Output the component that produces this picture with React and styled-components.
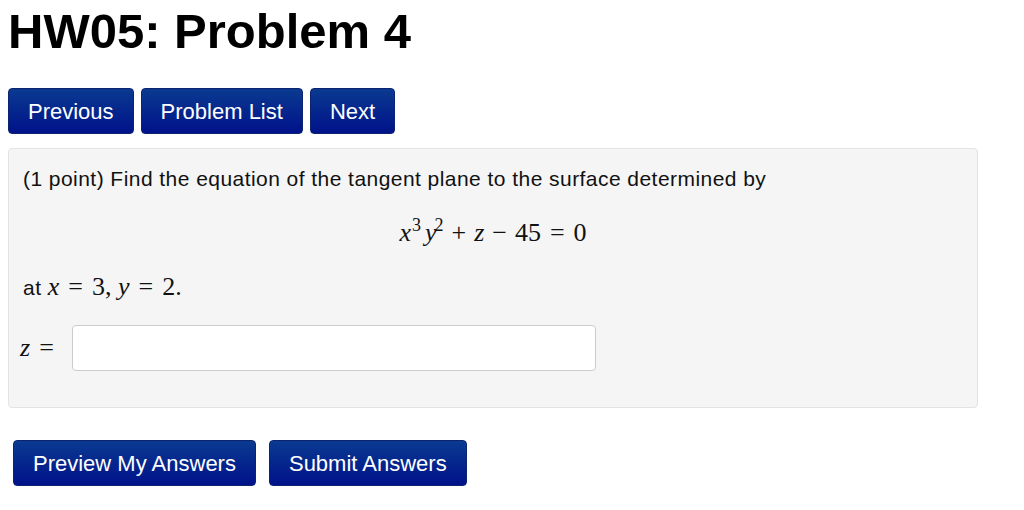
import React from 'react'
import styled, { createGlobalStyle } from 'styled-components'

const GlobalStyle = createGlobalStyle`
  body {
    margin: 0;
    background: #fff;
    font-family: "Liberation Sans", Arial, sans-serif;
    color: #111;
  }
`

const Page = styled.div`
  padding: 0 46px 0 8px;
`

const Title = styled.h1`
  margin: 0;
  padding-top: 5px;
  font-size: 49px;
  line-height: 52px;
  font-weight: bold;
  color: #000;
`

const ButtonRow = styled.div`
  display: flex;
  gap: ${({ gap }) => gap || 7}px;
  margin: ${({ margin }) => margin || '0'};
`

const NavButton = styled.button`
  height: 46px;
  padding: 1px ${({ pad }) => pad || 19}px 0;
  font-family: "Liberation Sans", Arial, sans-serif;
  font-size: 22px;
  color: #fff;
  background: linear-gradient(#0a3a90, #00128a);
  border: 1px solid #0c2370;
  border-radius: 4px;
  cursor: pointer;
`

const ProblemBox = styled.div`
  margin-top: 14px;
  background: #f5f5f5;
  border: 1px solid #e3e3e3;
  border-radius: 4px;
  padding: 17px 14px 0 14px;
  height: 260px;
  box-sizing: border-box;
`

const Text = styled.p`
  margin: 0;
  font-size: 21px;
  line-height: 26px;
  letter-spacing: 0.45px;
`

const Math = styled.span`
  font-family: "Liberation Serif", "Times New Roman", serif;
  font-size: 26px;
  letter-spacing: 0;
`

const Var = styled.i`
  font-style: italic;
`

const Sup = styled.sup`
  font-size: 18px;
  vertical-align: 0;
  position: relative;
  top: -10px;
  margin-left: ${({ tight }) => (tight ? -2 : 1)}px;
  margin-right: ${({ tight }) => (tight ? 0 : 4)}px;
`

const Op = styled.span`
  margin: 0 ${({ rel }) => (rel ? 9 : 8)}px;
`

const DisplayEq = styled.div`
  text-align: center;
  margin: 25px 0 22px;
  line-height: 32px;
`

const AnswerRow = styled.div`
  display: flex;
  align-items: center;
  gap: 9px;
  margin-top: 24px;
`

const Label = styled(Math)`
  margin-left: -3px;
`

const AnswerInput = styled.input`
  width: 524px;
  height: 46px;
  box-sizing: border-box;
  border: 1px solid #cccccc;
  border-radius: 4px;
  background: #fff;
  font-size: 18px;
  padding: 4px 8px;
`

export default function App() {
  return (
    <Page>
      <GlobalStyle />
      <Title>HW05: Problem 4</Title>
      <ButtonRow margin="31px 0 0 0">
        <NavButton>Previous</NavButton>
        <NavButton>Problem List</NavButton>
        <NavButton>Next</NavButton>
      </ButtonRow>
      <ProblemBox>
        <Text>(1 point) Find the equation of the tangent plane to the surface determined by</Text>
        <DisplayEq>
          <Math>
            <Var>x</Var><Sup>3</Sup><Var>y</Var><Sup tight>2</Sup><Op>+</Op><Var>z</Var><Op>−</Op>45<Op rel>=</Op>0
          </Math>
        </DisplayEq>
        <Text>
          at <Math><Var>x</Var><Op rel>=</Op>3, <Var>y</Var><Op rel>=</Op>2.</Math>
        </Text>
        <AnswerRow>
          <Label><Var>z</Var><Op rel>=</Op></Label>
          <AnswerInput type="text" />
        </AnswerRow>
      </ProblemBox>
      <ButtonRow gap={13} margin="32px 0 0 5px">
        <NavButton>Preview My Answers</NavButton>
        <NavButton>Submit Answers</NavButton>
      </ButtonRow>
    </Page>
  )
}
